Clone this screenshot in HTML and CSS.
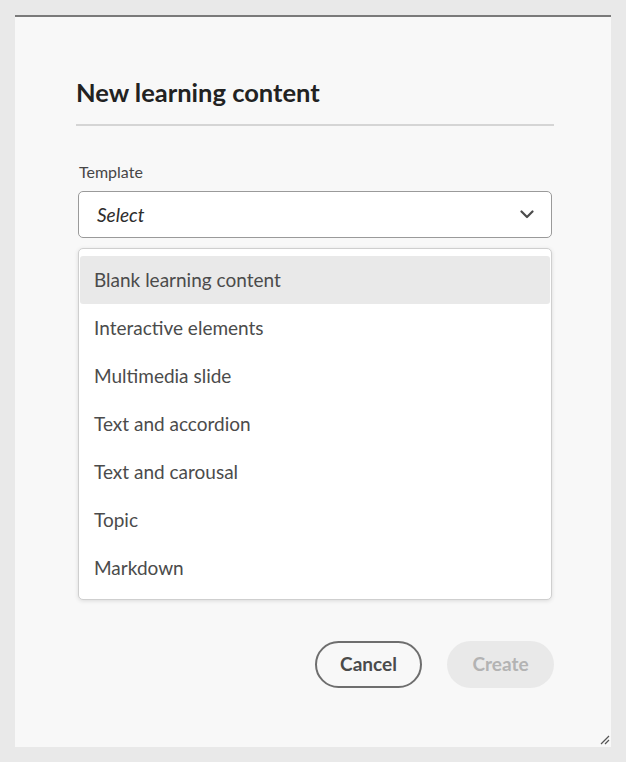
FILE: index.html
```html
<!DOCTYPE html>
<html>
<head>
<meta charset="utf-8">
<link rel="stylesheet" href="styles.css">
</head>
<body>
<div class="dialog">
  <h1 class="title">New learning content</h1>
  <div class="divider"></div>
  <div class="field">
    <label class="label">Template</label>
    <div class="select">
      <span class="placeholder">Select</span>
      <svg class="chev" width="14" height="9" viewBox="0 0 14 9"><path d="M1.5 1.5 L7 7 L12.5 1.5" fill="none" stroke="#4b4b4b" stroke-width="2.2" stroke-linecap="round" stroke-linejoin="round"/></svg>
    </div>
    <ul class="menu">
      <li class="item active">Blank learning content</li>
      <li class="item">Interactive elements</li>
      <li class="item">Multimedia slide</li>
      <li class="item">Text and accordion</li>
      <li class="item">Text and carousal</li>
      <li class="item">Topic</li>
      <li class="item">Markdown</li>
    </ul>
  </div>
  <div class="actions">
    <button class="btn cancel">Cancel</button>
    <button class="btn create">Create</button>
  </div>
  <svg class="resize" width="12" height="12" viewBox="0 0 12 12"><path d="M11 3 L3 11 M11 7 L7 11" stroke="#555" stroke-width="1.2"/></svg>
</div>
</body>
</html>
```
FILE: styles.css
```css
* { box-sizing: border-box; }
html, body { margin: 0; padding: 0; }
body {
  background: #e9e9e9;
  font-family: Lato, "Noto Sans", sans-serif;
  padding: 15px;
}
.dialog {
  position: relative;
  width: 596px;
  height: 732px;
  background: #f8f8f8;
  border-top: 2px solid #7a7a7a;
  padding: 60px 57px 0 61px;
}
.title {
  margin: 0;
  font-size: 25.5px;
  font-weight: 700;
  line-height: 30px;
  color: #222;
}
.divider {
  margin-top: 17px;
  height: 2px;
  background: #d5d5d5;
  width: 478px;
}
.field {
  margin-top: 36px;
  padding-left: 2px;
}
.label {
  display: block;
  font-size: 16px;
  line-height: 20px;
  color: #464646;
  margin-left: 1px;
}
.select {
  margin-top: 9px;
  width: 474px;
  height: 47px;
  background: #fff;
  border: 1px solid #9a9a9a;
  border-radius: 5px;
  display: flex;
  align-items: center;
  justify-content: space-between;
  padding: 0 17px 0 18px;
}
.placeholder {
  font-style: italic;
  font-size: 19px;
  color: #2c2c2c;
}
.menu {
  list-style: none;
  margin: 10px 0 0;
  padding: 7px 1px 7px;
  width: 474px;
  background: #fff;
  border: 1px solid #cfcfcf;
  border-radius: 5px;
  box-shadow: 0 1px 4px rgba(0,0,0,0.12);
}
.item {
  height: 48px;
  line-height: 47px;
  font-size: 19px;
  color: #4b4b4b;
  padding-left: 14px;
  border-radius: 3px;
}
.item.active { background: #e9e9e9; }
.actions {
  margin-top: 41px;
  display: flex;
  justify-content: flex-end;
  gap: 25px;
  width: 478px;
}
.btn {
  font-family: Lato, "Noto Sans", sans-serif;
  font-size: 19px;
  font-weight: 700;
  height: 47px;
  width: 107px;
  border-radius: 24px;
  padding: 0 0 3px;
}
.cancel {
  background: transparent;
  border: 2px solid #6e6e6e;
  color: #4b4b4b;
}
.create {
  background: #e9e9e9;
  border: none;
  color: #b3b3b3;
}
.resize {
  position: absolute;
  right: 1px;
  bottom: 2px;
}
```
